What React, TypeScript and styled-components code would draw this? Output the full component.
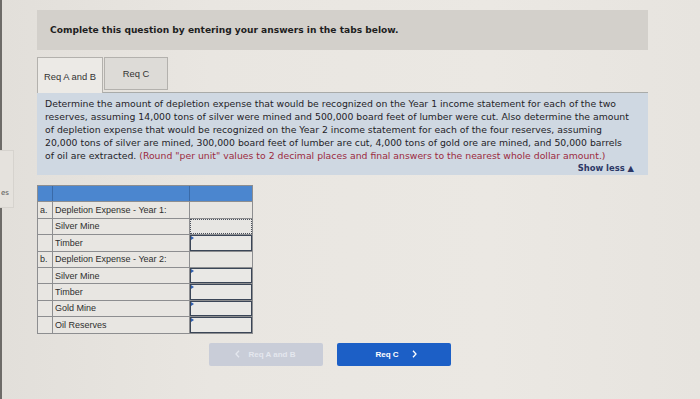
import React from "react";
import styled, { createGlobalStyle } from "styled-components";

const Global = createGlobalStyle`
  html, body { margin: 0; padding: 0; }
  body {
    width: 700px;
    height: 399px;
    overflow: hidden;
    background: #e8e5e0;
    font-family: "DejaVu Sans", Verdana, sans-serif;
  }
`;

const Page = styled.div`
  position: relative;
  width: 700px;
  height: 399px;
  display: flex;
  background: linear-gradient(90deg, #e2dfda 0%, #e9e6e1 30%, #ebe8e3 70%, #e7e4df 100%);
`;

const EdgeStrip = styled.div`
  width: 2px;
  background: #6d6b68;
  flex: none;
`;

const SideNote = styled.div`
  position: absolute;
  left: 0;
  top: 150px;
  width: 14px;
  height: 58px;
  border: 1px solid #d6d3ce;
  border-left: none;
  background: #e5e2dd;
  font-size: 7px;
  color: #555;
  display: flex;
  align-items: flex-end;
  justify-content: flex-end;
  padding: 0 4px 10px 0;
  box-sizing: border-box;
  overflow: hidden;
`;

const Main = styled.div`
  margin-left: 35px;
  width: 611px;
  padding-top: 10px;
  display: flex;
  flex-direction: column;
`;

const Header = styled.div`
  height: 40px;
  background: #d3d0cb;
  display: flex;
  align-items: center;
  padding-left: 13px;
  font-weight: bold;
  font-size: 9.1px;
  color: #1e1e1e;
`;

const Tabs = styled.div`
  display: flex;
  margin-top: 7px;
  height: 35px;
  border-bottom: 1px solid #a9aba9;
`;

const Tab = styled.div<{ $active?: boolean }>`
  width: ${(p) => (p.$active ? 66 : 64)}px;
  height: ${(p) => (p.$active ? 36 : 33)}px;
  box-sizing: border-box;
  border: 1px solid #b3b1ad;
  border-bottom: ${(p) => (p.$active ? "none" : "1px solid #b3b1ad")};
  background: ${(p) => (p.$active ? "#eceae6" : "#dddbd7")};
  display: flex;
  align-items: center;
  justify-content: center;
  font-family: "Liberation Sans", Arial, sans-serif;
  font-size: 9.4px;
  color: #333;
  margin-right: 1px;
  padding-top: ${(p) => (p.$active ? 2 : 0)}px;
  position: relative;
  z-index: ${(p) => (p.$active ? 1 : 0)};
`;

const Panel = styled.div`
  background: #cfd8e2;
  padding: 4px 8px 1px 8px;
  font-size: 9.3px;
  line-height: 13px;
  color: #1f2328;
  white-space: nowrap;
`;

const Warn = styled.span`
  color: #9c2a40;
`;

const ShowLess = styled.div`
  text-align: right;
  font-weight: bold;
  color: #2b3766;
  font-size: 8.4px;
  padding-right: 6px;
  line-height: 12px;
`;

const Table = styled.div`
  margin-top: 10px;
  align-self: flex-start;
  border: 1px solid #8d8e90;
  display: grid;
  grid-template-columns: 15px 137px 62px;
  grid-auto-rows: 15.4px;
  row-gap: 1px;
  background: #8d8e90;
  font-family: "Liberation Sans", Arial, sans-serif;
  font-size: 9px;
  color: #2e2e2e;
`;

const HeadCell = styled.div<{ $last?: boolean }>`
  background: #4b86cf;
  border-right: ${(p) => (p.$last ? "none" : "1px solid #3a6aa8")};
`;

const Cell = styled.div<{ $last?: boolean }>`
  border-right: ${(p) => (p.$last ? "none" : "1px solid #8d8e90")};
  background: #e8e6e2;
  display: flex;
  align-items: center;
  padding-left: 2px;
  white-space: nowrap;
  overflow: hidden;
`;

const InputCell = styled.div`
  background: #e8e6e2;
  position: relative;
`;

const InputBox = styled.div<{ $focused?: boolean }>`
  position: absolute;
  inset: 0;
  border: ${(p) => (p.$focused ? "1.5px dotted #4a4f5a" : "1.3px solid #3b4657")};
  background: ${(p) => (p.$focused ? "#e7e6e3" : "#e9e8e5")};
`;

const Marker = styled.div`
  position: absolute;
  left: 1px;
  top: 1px;
  width: 0;
  height: 0;
  border-top: 2px solid transparent;
  border-bottom: 2px solid transparent;
  border-left: 3px solid #2f5fb0;
`;

const NavRow = styled.div`
  display: flex;
  gap: 14px;
  margin-top: 9px;
  margin-left: 172px;
`;

const NavButton = styled.div<{ $primary?: boolean }>`
  width: 114px;
  height: 23px;
  border-radius: 2px;
  background: ${(p) => (p.$primary ? "#1c5fc6" : "#c9cdd8")};
  color: ${(p) => (p.$primary ? "#ffffff" : "#e4e7ee")};
  font-family: "Liberation Sans", Arial, sans-serif;
  font-weight: bold;
  font-size: 8px;
  display: flex;
  align-items: center;
  justify-content: center;
  gap: ${(p) => (p.$primary ? 13 : 9)}px;
  box-sizing: border-box;
  ${(p) => (p.$primary ? "padding-left: 4px;" : "padding-right: 2px;")}
`;

const ChevronIcon = ({ dir }: { dir: "left" | "right" }) => (
  <svg width="5" height="8" viewBox="0 0 5 8" fill="none">
    <path
      d={dir === "left" ? "M4 0.8 L1 4 L4 7.2" : "M1 0.8 L4 4 L1 7.2"}
      stroke="currentColor"
      strokeWidth="1.3"
    />
  </svg>
);

type Row = { letter?: string; label: string; input: boolean; focused?: boolean };

const rows: Row[] = [
  { letter: "a.", label: "Depletion Expense - Year 1:", input: false },
  { label: "Silver Mine", input: true, focused: true },
  { label: "Timber", input: true },
  { letter: "b.", label: "Depletion Expense - Year 2:", input: false },
  { label: "Silver Mine", input: true },
  { label: "Timber", input: true },
  { label: "Gold Mine", input: true },
  { label: "Oil Reserves", input: true },
];

export default function App() {
  return (
    <>
      <Global />
      <Page>
        <EdgeStrip />
        <SideNote>es</SideNote>
        <Main>
          <Header>Complete this question by entering your answers in the tabs below.</Header>
          <Tabs>
            <Tab $active>Req A and B</Tab>
            <Tab>Req C</Tab>
          </Tabs>
          <Panel>
            Determine the amount of depletion expense that would be recognized on the Year 1 income statement for each of the two
            <br />
            reserves, assuming 14,000 tons of silver were mined and 500,000 board feet of lumber were cut. Also determine the amount
            <br />
            of depletion expense that would be recognized on the Year 2 income statement for each of the four reserves, assuming
            <br />
            20,000 tons of silver are mined, 300,000 board feet of lumber are cut, 4,000 tons of gold ore are mined, and 50,000 barrels
            <br />
            of oil are extracted.{" "}
            <Warn>(Round "per unit" values to 2 decimal places and final answers to the nearest whole dollar amount.)</Warn>
            <ShowLess>Show less ▲</ShowLess>
          </Panel>
          <Table>
            <HeadCell />
            <HeadCell />
            <HeadCell $last />
            {rows.map((r, i) => (
              <React.Fragment key={i}>
                <Cell>{r.letter ?? ""}</Cell>
                <Cell>{r.label}</Cell>
                {r.input ? (
                  <InputCell>
                    <InputBox $focused={r.focused} />
                    {!r.focused && <Marker />}
                  </InputCell>
                ) : (
                  <Cell $last />
                )}
              </React.Fragment>
            ))}
          </Table>
          <NavRow>
            <NavButton>
              <ChevronIcon dir="left" />
              <span>Req A and B</span>
            </NavButton>
            <NavButton $primary>
              <span>Req C</span>
              <ChevronIcon dir="right" />
            </NavButton>
          </NavRow>
        </Main>
      </Page>
    </>
  );
}
